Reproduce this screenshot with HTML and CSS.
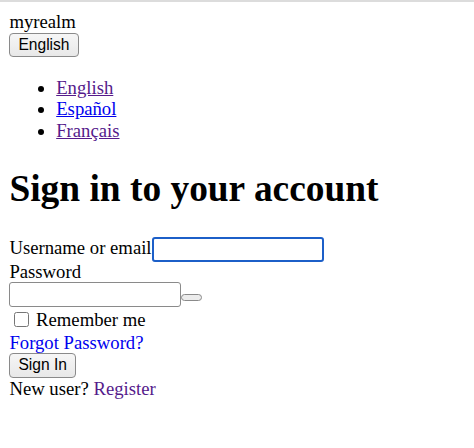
FILE: index.html
```html
<!DOCTYPE html>
<html lang="en">
<head>
<meta charset="utf-8">
<title>Sign in to myrealm</title>
<link rel="stylesheet" href="styles.css">
</head>
<body>
<div class="topbar"></div>
<div class="page">
  <div class="realm">myrealm</div>
  <div class="locale">
    <button class="btn" type="button">English</button>
    <ul class="locale-list">
      <li><a class="visited" href="#en">English</a></li>
      <li><a class="fresh" href="#es">Español</a></li>
      <li><a class="visited" href="#fr">Français</a></li>
    </ul>
  </div>
  <h1 class="title">Sign in to your account</h1>
  <form class="login" action="#" onsubmit="return false">
    <div class="row"><label for="username">Username or email</label><input class="field field-focus" id="username" type="text" autofocus></div>
    <div class="row row-label"><label for="password">Password</label></div>
    <div class="row"><input class="field" id="password" type="password"><button class="reveal" type="button" aria-label="Show password"></button></div>
    <div class="row row-check"><label class="check"><input class="checkbox" type="checkbox"> Remember me</label></div>
    <div class="row"><a class="plain-link fresh" href="#forgot">Forgot Password?</a></div>
    <div class="row"><button class="btn" type="submit">Sign In</button></div>
    <div class="row">New user? <a class="plain-link visited" href="#register">Register</a></div>
  </form>
</div>
</body>
</html>
```
FILE: styles.css
```css
html, body {
  margin: 0;
  padding: 0;
  background: #ffffff;
}
body {
  font-family: "Liberation Serif", "Times New Roman", serif;
  font-size: 18.7px;
  line-height: 1.15;
  color: #000000;
}
.topbar {
  height: 2px;
  background: #dcdcdc;
}
.page {
  padding: 9px 9px 9px 9.4px;
}
.realm {
  line-height: 21.5px;
}
.btn {
  font-family: "Liberation Sans", Arial, sans-serif;
  font-size: 15.6px;
  line-height: 18px;
  color: #000;
  background: linear-gradient(#f6f6f6, #e8e8e8);
  border: 1px solid #8a8a8a;
  border-radius: 4px;
  padding: 2px 8px;
  margin: 0;
  height: 24.5px;
  vertical-align: baseline;
}
.locale-list {
  margin: 19.5px 0 0;
  padding-left: 46.8px;
  list-style: disc;
}
.locale-list li {
  line-height: 21.6px;
}
a.visited { color: #551a8b; }
a.fresh { color: #0000ee; }
.plain-link { text-decoration: none; }
.title {
  font-size: 37.4px;
  font-weight: bold;
  line-height: 43px;
  margin: 26px 0 27px;
}
.login {
  margin: 0;
}
.row {
  line-height: 21.5px;
}
.row-label {
  margin-top: -1px;
}
.row-check {
  padding-top: 2px;
}
.field {
  box-sizing: border-box;
  height: 24.5px;
  width: 172px;
  margin: 0;
  padding: 1px 3px;
  font-size: 15.6px;
  font-family: "Liberation Sans", Arial, sans-serif;
  border: 1px solid #8a8a8a;
  border-radius: 3px;
  background: #fff;
  vertical-align: baseline;
}
.field-focus {
  border: 2px solid #1c5fc8;
  outline: none;
  caret-color: #000;
}
.reveal {
  box-sizing: border-box;
  width: 21px;
  height: 7px;
  padding: 0;
  margin: 0;
  border: 1px solid #8a8a8a;
  border-radius: 4px;
  background: #ececec;
  vertical-align: baseline;
}
.check {
  display: inline-flex;
  align-items: center;
}
.checkbox {
  width: 15px;
  height: 15px;
  margin: 3px 7px 3px 4.7px;
}
```
